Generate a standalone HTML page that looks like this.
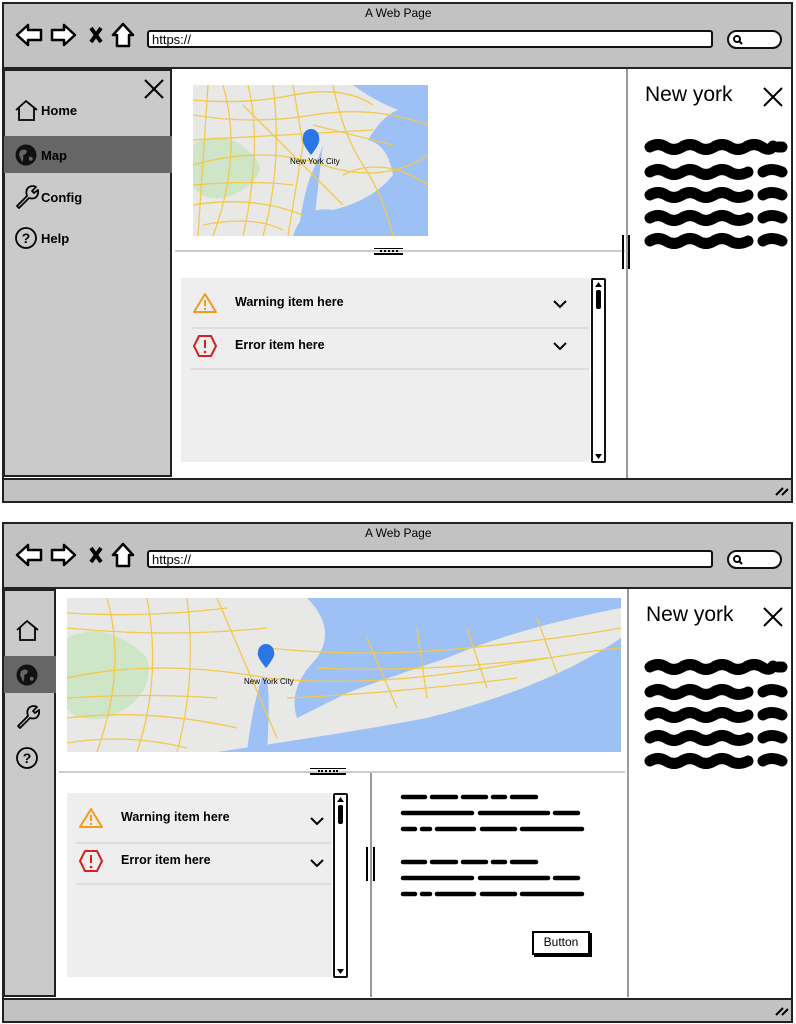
<!DOCTYPE html>
<html><head><meta charset="utf-8"><style>
*{margin:0;padding:0;box-sizing:border-box}
body{width:796px;height:1024px;background:#fff;position:relative;overflow:hidden;font-family:"Liberation Sans",sans-serif;color:#000}
.a{position:absolute}
.win{border:2px solid #222;background:#fff}
.bar{background:#c2c2c2}
.t{font-size:12px}
.nav{font-size:13px;font-weight:bold}
.list{background:#eeeeee}
.item{font-size:12.5px;font-weight:bold}
.sep{height:2px;background:#ddd}
.sb{border:2px solid #111;background:#fff;border-radius:2px}
</style></head><body>

<!-- ============ TOP WINDOW ============ -->
<div class="a win" style="left:2px;top:2px;width:791px;height:501px"></div>
<div class="a bar" style="left:4px;top:4px;width:787px;height:64px"></div>
<div class="a t" style="left:365px;top:6px">A Web Page</div>
<svg class="a" style="left:14px;top:20px" width="140" height="30" viewBox="0 0 140 30">
<path d="M3 15 L14 5 L14 10 L27 10 L27 20 L14 20 L14 25 Z" fill="#fff" stroke="#000" stroke-width="2.5" stroke-linejoin="round"/>
<path d="M61 15 L50 5 L50 10 L38 10 L38 20 L50 20 L50 25 Z" fill="#fff" stroke="#000" stroke-width="2.5" stroke-linejoin="round"/>
<path d="M77 8 L87 22 M87 8 L77 22" stroke="#000" stroke-width="4"/>
<path d="M109 4 L99 15 L103 15 L103 26 L115 26 L115 15 L119 15 Z" fill="#fff" stroke="#000" stroke-width="2.5" stroke-linejoin="round"/>
</svg>
<div class="a" style="left:147px;top:30px;width:566px;height:18px;border:2px solid #111;background:#fff;border-radius:3px"></div>
<div class="a t" style="left:152px;top:32px;font-size:13px">https://</div>
<div class="a" style="left:727px;top:30px;width:55px;height:19px;border:2px solid #111;background:#fff;border-radius:10px"></div>
<svg class="a" style="left:732px;top:34px" width="12" height="12"><circle cx="5" cy="5" r="3" fill="none" stroke="#000" stroke-width="2"/><path d="M7 7 L10 10" stroke="#000" stroke-width="2"/></svg>
<div class="a" style="left:2px;top:67px;width:791px;height:2px;background:#222"></div>
<!-- sidebar -->
<div class="a" style="left:3px;top:69px;width:169px;height:408px;background:#cacaca;border:2px solid #222"></div>
<svg class="a" style="left:143px;top:78px" width="22" height="22"><path d="M2 2 L20 20 M20 2 L2 20" stroke="#000" stroke-width="2"/></svg>
<div class="a" style="left:4px;top:136px;width:168px;height:37px;background:#666"></div>
<svg class="a" style="left:14px;top:98px" width="26" height="24"><path d="M2 12 L12 3 L23 12 M5 10 L5 22 L20 22 L20 10" fill="none" stroke="#000" stroke-width="1.8"/></svg>
<div class="a nav" style="left:41px;top:103px">Home</div>
<svg class="a" style="left:14px;top:143px" width="24" height="24"><circle cx="12" cy="12" r="10.5" fill="#111"/><path d="M6 8 Q10 5 13 8 Q12 12 9 12 Q10 16 8 19 Q6 14 5 12Z M15 14 Q18 13 19 16 Q17 19 15 17Z" fill="#666"/></svg>
<div class="a nav" style="left:41px;top:148px">Map</div>
<svg class="a" style="left:14px;top:184px" width="26" height="26"><path d="M3 22 L13 12 Q11 6 15 3 Q19 1 22 3 L18 7 L20 9 L24 6 Q25 11 21 14 Q18 15 15 14 L5 24 Z" fill="none" stroke="#000" stroke-width="1.8" stroke-linejoin="round"/></svg>
<div class="a nav" style="left:41px;top:190px">Config</div>
<svg class="a" style="left:14px;top:226px" width="24" height="24"><circle cx="12" cy="12" r="10" fill="none" stroke="#000" stroke-width="1.8"/><text x="12" y="17" text-anchor="middle" font-size="14" font-weight="bold" font-family="Liberation Sans">?</text></svg>
<div class="a nav" style="left:41px;top:231px">Help</div>
<!-- map -->
<svg class="a" style="left:193px;top:85px" width="235" height="151" viewBox="0 0 235 151">
<rect width="235" height="151" fill="#e8e8e6"/>
<path d="M0 60 Q30 40 60 70 Q80 90 40 110 Q10 120 0 100Z" fill="#cfe5c8"/>
<path d="M160 0 L235 0 L235 151 L100 151 Q110 120 140 125 Q180 115 200 90 Q195 60 175 55 Q190 30 205 25 Q180 15 160 0Z" fill="#9dc0f5"/>
<path d="M105 151 Q110 110 118 90 Q125 75 130 60 Q125 100 120 151Z" fill="#9dc0f5"/>
<g fill="none" stroke="#f2c94c" stroke-width="1.3">
<path d="M0 30 Q60 40 120 30 T235 40"/><path d="M0 80 Q70 60 130 80 T235 70"/><path d="M30 0 Q50 70 20 151"/><path d="M80 0 Q90 80 70 151"/><path d="M0 120 Q60 110 110 130"/><path d="M140 0 Q150 50 170 80 T200 151"/><path d="M150 90 Q190 70 235 100"/><path d="M50 20 L150 120"/><path d="M0 55 L180 45"/>
<path d="M0 15 Q50 20 100 10 T180 20"/><path d="M55 0 Q70 60 50 151"/><path d="M100 0 L110 60 L95 151"/><path d="M0 100 Q60 95 100 100"/><path d="M10 140 Q60 130 90 145"/><path d="M120 40 L200 60"/><path d="M15 0 L5 151"/>
</g>
<path d="M118 70 Q108 58 110 52 A8 8 0 1 1 126 52 Q128 58 118 70" fill="#2a76e6"/>
<text x="97" y="79" font-size="8" font-family="Liberation Sans">New York City</text>
</svg>
<!-- splitter -->
<div class="a" style="left:175px;top:250px;width:450px;height:2px;background:#ccc"></div>
<div class="a" style="left:374px;top:248px;width:29px;height:7px;border-top:1.5px solid #000;border-bottom:2px solid #000"></div>
<div class="a" style="left:380px;top:250px;width:18px;height:2px;border-top:2px dotted #000"></div>
<!-- list -->
<div class="a list" style="left:181px;top:278px;width:409px;height:184px"></div>
<div class="a sep" style="left:191px;top:327px;width:398px"></div>
<div class="a sep" style="left:191px;top:368px;width:398px"></div>
<svg class="a" style="left:192px;top:292px" width="26" height="22"><path d="M13 2 L24 20 L2 20 Z" fill="none" stroke="#f39a1e" stroke-width="2" stroke-linejoin="round"/><path d="M13 8 L13 14" stroke="#f39a1e" stroke-width="2"/><circle cx="13" cy="17" r="1.2" fill="#f39a1e"/></svg>
<div class="a item" style="left:235px;top:295px">Warning item here</div>
<svg class="a" style="left:192px;top:334px" width="26" height="24"><path d="M7 2 L19 2 L24 12 L19 22 L7 22 L2 12Z" fill="none" stroke="#d32020" stroke-width="2"/><path d="M13 6 L13 14" stroke="#d32020" stroke-width="2"/><circle cx="13" cy="18" r="1.3" fill="#d32020"/></svg>
<div class="a item" style="left:235px;top:338px">Error item here</div>
<svg class="a" style="left:552px;top:298px" width="16" height="60"><path d="M2 3 L8 9 L14 3 M2 45 L8 51 L14 45" fill="none" stroke="#000" stroke-width="2"/></svg>
<div class="a sb" style="left:591px;top:278px;width:15px;height:185px"></div>
<svg class="a" style="left:591px;top:278px" width="15" height="185"><path d="M4 9 L7.5 4 L11 9Z M4 176 L7.5 181 L11 176Z" fill="#000"/><rect x="5" y="12" width="5" height="19" rx="2" fill="#000"/></svg>
<!-- right panel -->
<div class="a" style="left:626px;top:69px;width:1.5px;height:409px;background:#999"></div>
<svg class="a" style="left:620px;top:235px" width="12" height="34"><path d="M3 0 L3 34 M9 0 L9 34" stroke="#000" stroke-width="2"/></svg>
<div class="a" style="left:645px;top:83px;font-size:21px">New york</div>
<svg class="a" style="left:762px;top:86px" width="22" height="22"><path d="M2 2 L20 20 M20 2 L2 20" stroke="#000" stroke-width="2"/></svg>
<svg class="a" style="left:643px;top:134px" width="145" height="118">
<g stroke="#000" stroke-width="11" stroke-linecap="round" fill="none">
<path d="M7 13 Q15 8 23 13 T39 13 T55 13 T71 13 T87 13 T103 13 T119 13 T130 12 M135 13 L139 13"/>
<path d="M7 38 Q15 33 23 38 T39 38 T55 38 T71 38 T87 38 T105 38 M120 38 Q128 33 139 38"/>
<path d="M7 61 Q15 56 23 61 T39 61 T55 61 T71 61 T87 61 T105 61 M120 61 Q128 56 139 61"/>
<path d="M7 84 Q15 79 23 84 T39 84 T55 84 T71 84 T87 84 T105 84 M120 84 Q128 79 139 84"/>
<path d="M7 107 Q15 102 23 107 T39 107 T55 107 T71 107 T87 107 T105 107 M120 107 Q128 102 139 107"/>
</g></svg>
<!-- status bar -->
<div class="a bar" style="left:4px;top:478px;width:787px;height:23px;border-top:2px solid #222"></div>
<svg class="a" style="left:774px;top:485px" width="16" height="12"><path d="M2 10 L9 3 M8 10 L14 4" stroke="#000" stroke-width="2"/></svg>

<!-- ============ BOTTOM WINDOW ============ -->
<div class="a win" style="left:2px;top:522px;width:791px;height:501px"></div>
<div class="a bar" style="left:4px;top:524px;width:787px;height:64px"></div>
<div class="a t" style="left:365px;top:526px">A Web Page</div>
<svg class="a" style="left:14px;top:540px" width="140" height="30" viewBox="0 0 140 30">
<path d="M3 15 L14 5 L14 10 L27 10 L27 20 L14 20 L14 25 Z" fill="#fff" stroke="#000" stroke-width="2.5" stroke-linejoin="round"/>
<path d="M61 15 L50 5 L50 10 L38 10 L38 20 L50 20 L50 25 Z" fill="#fff" stroke="#000" stroke-width="2.5" stroke-linejoin="round"/>
<path d="M77 8 L87 22 M87 8 L77 22" stroke="#000" stroke-width="4"/>
<path d="M109 4 L99 15 L103 15 L103 26 L115 26 L115 15 L119 15 Z" fill="#fff" stroke="#000" stroke-width="2.5" stroke-linejoin="round"/>
</svg>
<div class="a" style="left:147px;top:550px;width:566px;height:18px;border:2px solid #111;background:#fff;border-radius:3px"></div>
<div class="a t" style="left:152px;top:552px;font-size:13px">https://</div>
<div class="a" style="left:727px;top:550px;width:55px;height:19px;border:2px solid #111;background:#fff;border-radius:10px"></div>
<svg class="a" style="left:732px;top:554px" width="12" height="12"><circle cx="5" cy="5" r="3" fill="none" stroke="#000" stroke-width="2"/><path d="M7 7 L10 10" stroke="#000" stroke-width="2"/></svg>
<div class="a" style="left:2px;top:587px;width:791px;height:2px;background:#222"></div>
<!-- sidebar -->
<div class="a" style="left:3px;top:589px;width:53px;height:408px;background:#cacaca;border:2px solid #222"></div>
<div class="a" style="left:4px;top:656px;width:52px;height:37px;background:#666"></div>
<svg class="a" style="left:15px;top:618px" width="26" height="24"><path d="M2 12 L12 3 L23 12 M5 10 L5 22 L20 22 L20 10" fill="none" stroke="#000" stroke-width="1.8"/></svg>
<svg class="a" style="left:15px;top:663px" width="24" height="24"><circle cx="12" cy="12" r="10.5" fill="#111"/><path d="M6 8 Q10 5 13 8 Q12 12 9 12 Q10 16 8 19 Q6 14 5 12Z M15 14 Q18 13 19 16 Q17 19 15 17Z" fill="#666"/></svg>
<svg class="a" style="left:15px;top:704px" width="26" height="26"><path d="M3 22 L13 12 Q11 6 15 3 Q19 1 22 3 L18 7 L20 9 L24 6 Q25 11 21 14 Q18 15 15 14 L5 24 Z" fill="none" stroke="#000" stroke-width="1.8" stroke-linejoin="round"/></svg>
<svg class="a" style="left:15px;top:746px" width="24" height="24"><circle cx="12" cy="12" r="10" fill="none" stroke="#000" stroke-width="1.8"/><text x="12" y="17" text-anchor="middle" font-size="14" font-weight="bold" font-family="Liberation Sans">?</text></svg>
<!-- map wide -->
<svg class="a" style="left:67px;top:598px" width="554" height="154" viewBox="0 0 554 154">
<rect width="554" height="154" fill="#e8e8e6"/>
<path d="M0 40 Q40 20 80 60 Q90 100 40 120 Q10 125 0 110Z" fill="#cfe5c8"/>
<path d="M240 0 L554 0 L554 10 Q450 30 380 60 Q320 80 280 95 Q250 110 230 120 Q220 90 250 60 Q270 30 240 0Z" fill="#9dc0f5"/>
<path d="M554 40 Q480 90 360 120 Q280 135 150 154 L554 154Z" fill="#9dc0f5"/>
<path d="M180 154 Q185 110 195 80 Q205 70 200 154Z" fill="#9dc0f5"/>
<g fill="none" stroke="#f2c94c" stroke-width="1.3">
<path d="M0 30 Q100 40 200 30"/><path d="M0 80 Q90 60 200 80 Q300 90 420 70 T554 50"/><path d="M40 0 Q60 70 30 154"/><path d="M120 0 Q130 80 110 154"/><path d="M0 120 Q80 110 170 130"/><path d="M200 50 Q300 60 400 50 T554 30"/><path d="M220 100 Q330 95 450 80"/><path d="M150 0 L210 140"/><path d="M300 40 L330 110"/><path d="M400 30 L420 90"/>
<path d="M0 15 Q80 20 160 10"/><path d="M80 0 Q95 80 70 154"/><path d="M0 100 Q80 95 150 100"/><path d="M250 70 Q350 75 480 60"/><path d="M350 30 L360 100"/><path d="M470 20 L490 75"/><path d="M0 145 Q60 135 120 150"/>
</g>
<path d="M199 70 Q189 58 191 54 A8 8 0 1 1 207 54 Q209 58 199 70" fill="#2a76e6"/>
<text x="177" y="86" font-size="8" font-family="Liberation Sans">New York City</text>
</svg>
<!-- splitter -->
<div class="a" style="left:59px;top:771px;width:566px;height:2px;background:#ccc"></div>
<div class="a" style="left:310px;top:768px;width:36px;height:7px;border-top:1.5px solid #000;border-bottom:2px solid #000"></div>
<div class="a" style="left:318px;top:770px;width:20px;height:2px;border-top:2px dotted #000"></div>
<!-- list -->
<div class="a list" style="left:67px;top:793px;width:265px;height:184px"></div>
<div class="a sep" style="left:76px;top:842px;width:255px"></div>
<div class="a sep" style="left:76px;top:883px;width:255px"></div>
<svg class="a" style="left:78px;top:807px" width="26" height="22"><path d="M13 2 L24 20 L2 20 Z" fill="none" stroke="#f39a1e" stroke-width="2" stroke-linejoin="round"/><path d="M13 8 L13 14" stroke="#f39a1e" stroke-width="2"/><circle cx="13" cy="17" r="1.2" fill="#f39a1e"/></svg>
<div class="a item" style="left:121px;top:810px">Warning item here</div>
<svg class="a" style="left:78px;top:849px" width="26" height="24"><path d="M7 2 L19 2 L24 12 L19 22 L7 22 L2 12Z" fill="none" stroke="#d32020" stroke-width="2"/><path d="M13 6 L13 14" stroke="#d32020" stroke-width="2"/><circle cx="13" cy="18" r="1.3" fill="#d32020"/></svg>
<div class="a item" style="left:121px;top:853px">Error item here</div>
<svg class="a" style="left:309px;top:815px" width="16" height="60"><path d="M2 3 L8 9 L14 3 M2 45 L8 51 L14 45" fill="none" stroke="#000" stroke-width="2"/></svg>
<div class="a sb" style="left:333px;top:793px;width:15px;height:185px"></div>
<svg class="a" style="left:333px;top:793px" width="15" height="185"><path d="M4 9 L7.5 4 L11 9Z M4 176 L7.5 181 L11 176Z" fill="#000"/><rect x="5" y="12" width="5" height="19" rx="2" fill="#000"/></svg>
<!-- vertical divider -->
<div class="a" style="left:370px;top:773px;width:1.5px;height:224px;background:#999"></div>
<svg class="a" style="left:365px;top:847px" width="12" height="34"><path d="M2 0 L2 34 M9 0 L9 34" stroke="#000" stroke-width="2"/></svg>
<!-- text scribbles -->
<svg class="a" style="left:400px;top:790px" width="190" height="110">
<g stroke="#000" stroke-width="4.5" stroke-linecap="round" fill="none">
<path d="M3 7 L25 7 M32 7 L56 7 M63 7 L86 7 M93 7 L105 7 M112 7 L136 7"/>
<path d="M3 23 L72 23 M80 23 L148 23 M155 23 L178 23"/>
<path d="M3 39 L15 39 M22 39 L30 39 M37 39 L74 39 M82 39 L115 39 M122 39 L182 39"/>
<path d="M3 72 L25 72 M32 72 L56 72 M63 72 L86 72 M93 72 L105 72 M112 72 L136 72"/>
<path d="M3 88 L72 88 M80 88 L148 88 M155 88 L178 88"/>
<path d="M3 104 L15 104 M22 104 L30 104 M37 104 L74 104 M82 104 L115 104 M122 104 L182 104"/>
</g></svg>
<div class="a" style="left:532px;top:931px;width:58px;height:24px;border:2px solid #000;background:#fff;box-shadow:2px 2px 0 #000;font-size:12px;text-align:center;line-height:19px">Button</div>
<!-- right panel -->
<div class="a" style="left:627px;top:589px;width:1.5px;height:408px;background:#999"></div>
<div class="a" style="left:646px;top:603px;font-size:21px">New york</div>
<svg class="a" style="left:762px;top:606px" width="22" height="22"><path d="M2 2 L20 20 M20 2 L2 20" stroke="#000" stroke-width="2"/></svg>
<svg class="a" style="left:643px;top:654px" width="145" height="118">
<g stroke="#000" stroke-width="11" stroke-linecap="round" fill="none">
<path d="M7 13 Q15 8 23 13 T39 13 T55 13 T71 13 T87 13 T103 13 T119 13 T130 12 M135 13 L139 13"/>
<path d="M7 38 Q15 33 23 38 T39 38 T55 38 T71 38 T87 38 T105 38 M120 38 Q128 33 139 38"/>
<path d="M7 61 Q15 56 23 61 T39 61 T55 61 T71 61 T87 61 T105 61 M120 61 Q128 56 139 61"/>
<path d="M7 84 Q15 79 23 84 T39 84 T55 84 T71 84 T87 84 T105 84 M120 84 Q128 79 139 84"/>
<path d="M7 107 Q15 102 23 107 T39 107 T55 107 T71 107 T87 107 T105 107 M120 107 Q128 102 139 107"/>
</g></svg>
<!-- status bar -->
<div class="a bar" style="left:4px;top:998px;width:787px;height:23px;border-top:2px solid #222"></div>
<svg class="a" style="left:774px;top:1005px" width="16" height="12"><path d="M2 10 L9 3 M8 10 L14 4" stroke="#000" stroke-width="2"/></svg>
</body></html>
